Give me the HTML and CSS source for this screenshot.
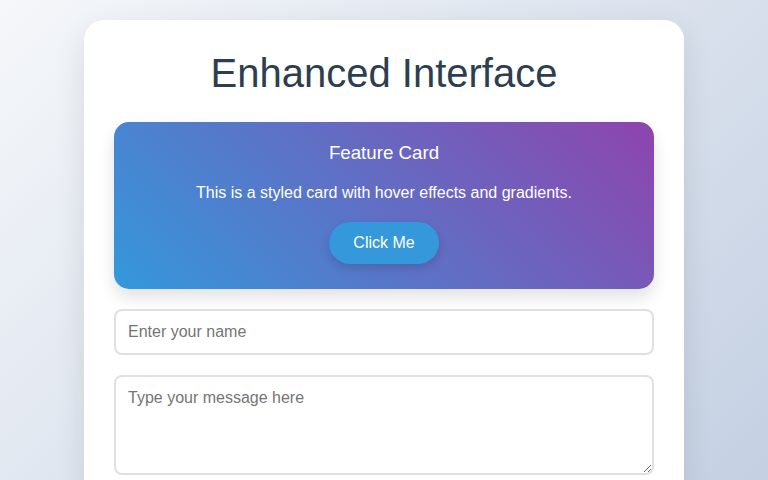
FILE: index.html
```html
<!DOCTYPE html>
<html lang="en">
<head>
<meta charset="utf-8">
<title>Enhanced Interface</title>
<link rel="stylesheet" href="styles.css">
</head>
<body>
<main class="container">
  <h1 class="title">Enhanced Interface</h1>
  <section class="card">
    <h3 class="card-title">Feature Card</h3>
    <p class="card-text">This is a styled card with hover effects and gradients.</p>
    <button class="btn" type="button">Click Me</button>
  </section>
  <input class="field" type="text" placeholder="Enter your name">
  <textarea class="field area" placeholder="Type your message here"></textarea>
</main>
</body>
</html>
```

FILE: styles.css
```css
html, body {
  margin: 0;
  padding: 0;
}
body {
  min-height: 100vh;
  font-family: "Liberation Sans", Arial, sans-serif;
  background: linear-gradient(135deg, #f5f7fa 0%, #c3cfe2 100%);
  padding-top: 20px;
  box-sizing: border-box;
}
.container {
  width: 600px;
  margin: 0 auto;
  box-sizing: border-box;
  background: #ffffff;
  border-radius: 20px;
  padding: 30px 30px 30px;
  box-shadow: 0 10px 30px rgba(0, 0, 0, 0.1);
  display: flex;
  flex-direction: column;
}
.title {
  margin: 0 0 26px;
  font-size: 40px;
  font-weight: 400;
  line-height: 46px;
  color: #2c3e50;
  text-align: center;
}
.card {
  background: linear-gradient(45deg, #3498db, #8e44ad);
  border-radius: 15px;
  padding: 20px 20px 25px;
  color: #ffffff;
  text-align: center;
  box-shadow: 0 8px 16px rgba(0, 0, 0, 0.12);
  display: flex;
  flex-direction: column;
  align-items: center;
}
.card-title {
  margin: 0 0 20px;
  font-size: 18.72px;
  font-weight: 400;
  line-height: 22px;
}
.card-text {
  margin: 0 0 20px;
  font-size: 16px;
  line-height: 18px;
}
.btn {
  font-family: "Liberation Sans", Arial, sans-serif;
  font-size: 16px;
  line-height: 18px;
  color: #ffffff;
  background: #3498db;
  border: none;
  border-radius: 25px;
  padding: 12px 24px;
  box-shadow: 0 4px 10px rgba(0, 0, 0, 0.15);
  cursor: pointer;
}
.field {
  display: block;
  width: 100%;
  box-sizing: border-box;
  margin-top: 20px;
  font-family: "Liberation Sans", Arial, sans-serif;
  font-size: 16px;
  line-height: 18px;
  padding: 12px;
  border: 2px solid #e0e0e0;
  border-radius: 8px;
  color: #333333;
  background: #ffffff;
}
.field::placeholder {
  color: #757575;
}
.area {
  height: 100px;
  margin-top: 20px;
  resize: vertical;
}
```
